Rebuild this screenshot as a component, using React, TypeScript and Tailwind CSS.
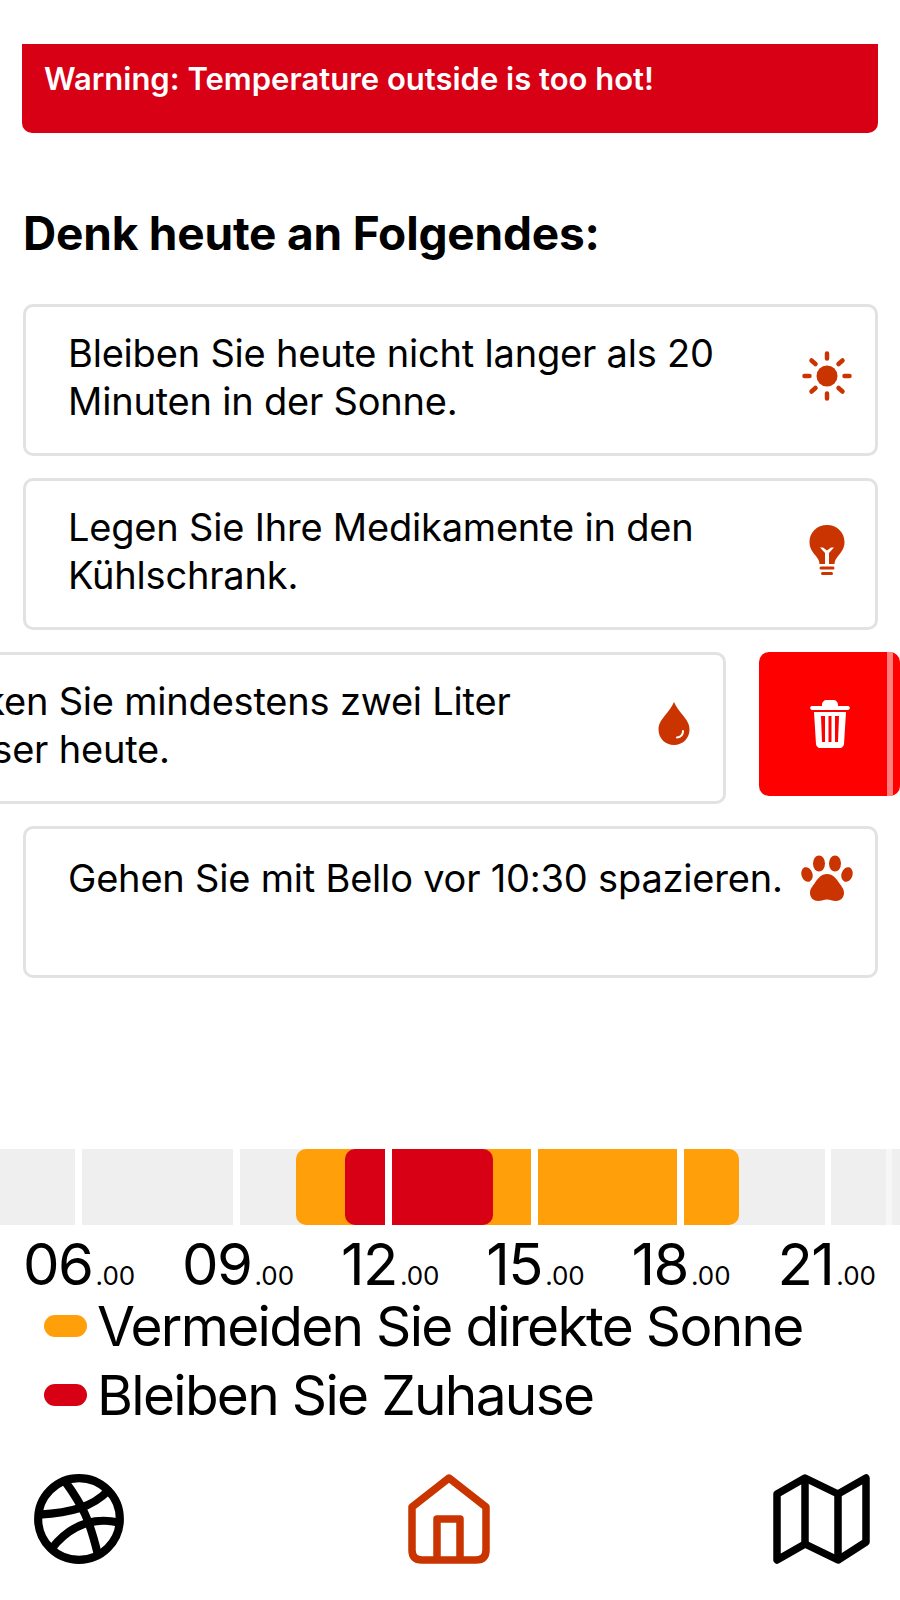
import { Dribbble } from "lucide-react";

const RUST = "#c93400";

function SunIcon() {
  return (
    <svg width="50" height="50" viewBox="0 0 50 50" fill="none">
      <circle cx="25" cy="25" r="10.5" fill={RUST} />
      <g stroke={RUST} strokeWidth="4.5" strokeLinecap="round">
        <path d="M25 2.5v5M25 42.5v5M2.5 25h5M42.5 25h5M9.5 9.5l4 3.5M36.5 37l4 3.5M9.5 40.5l4-3.5M36.5 13l4-3.5" />
      </g>
    </svg>
  );
}

function BulbIcon() {
  return (
    <svg width="36" height="52" viewBox="0 0 36 52">
      <path fill={RUST} d="M18 0C8 0 .5 7.5.5 17c0 6 3 10 6 13.500 2.500 3 4 5.500 4 8.500h15c0-3 1.500-5.500 4-8.500 3-3.500 6-7.500 6-13.500C35.500 7.500 28 0 18 0z" />
      <path fill="#fff" d="M11 22.500l3 0 4 3 4-3 3 0-5 5.500v11h-4V28z" />
      <rect x="10.500" y="41.500" width="15" height="3" rx="1.500" fill={RUST} />
      <rect x="12" y="47" width="12" height="3" rx="1.500" fill={RUST} />
    </svg>
  );
}

function DropIcon() {
  return (
    <svg width="32" height="44" viewBox="0 0 32 44">
      <path fill={RUST} d="M16 0c2 5 5.500 9 9.500 14 3.500 4.500 6 8 6 13.500C31.500 36.500 24.500 43 16 43S.5 36.500.5 27.500C.5 22 3 18.500 6.500 14 10.500 9 14 5 16 0z" />
      <path fill="none" stroke="#fff" strokeWidth="2" strokeLinecap="round" d="M25 29c0 3.500-2 6-6 6.500" />
    </svg>
  );
}

function TrashIcon() {
  return (
    <svg width="40" height="48" viewBox="0 0 40 48">
      <path fill="#fff" d="M12 5c0-3 2-5 5-5h6c3 0 5 2 5 5v1h10c1 0 1.800.8 1.800 1.800S39 10 38 10H2C1 10 .2 8.800.2 7.800S1 6 2 6h10z" />
      <path fill="#fff" fillRule="evenodd" d="M4 12h32l-2 32c-.2 2.300-2 4-4 4H10c-2 0-3.800-1.700-4-4zm7 4l1 26h3V16zm7.500 0v26h3V16zM25 16v26h3l1-26z" />
    </svg>
  );
}

function PawIcon() {
  return (
    <svg width="52" height="46" viewBox="0 0 52 46" fill={RUST}>
      <ellipse cx="6" cy="19.500" rx="5.500" ry="7.500" transform="rotate(-18 6 19.500)" />
      <ellipse cx="18" cy="8.500" rx="6" ry="8" />
      <ellipse cx="34" cy="8.500" rx="6" ry="8" />
      <ellipse cx="46" cy="19.500" rx="5.500" ry="7.500" transform="rotate(18 46 19.500)" />
      <path d="M26 19c6 0 9.500 5 12.500 9.500 2 3 4.500 5 4.500 9.500 0 5-4 8-8 8-4 0-6-1.500-9-1.500S21 46 17 46c-4 0-8-3-8-8 0-4.500 2.500-6.500 4.500-9.500C16.500 24 20 19 26 19z" />
    </svg>
  );
}

function HomeIcon() {
  return (
    <svg className="mr-[3px]" width="82" height="90" viewBox="0 0 82 90" fill="none" stroke={RUST} strokeWidth="7.5" strokeLinejoin="round">
      <path d="M41 4 L78 33 V76 Q78 86 68 86 H14 Q4 86 4 76 V33 Z" />
      <path d="M29 86 V45 H52 V86" />
    </svg>
  );
}

function MapIcon() {
  return (
    <svg width="97" height="90" viewBox="0 0 97 90" fill="none" stroke="#000" strokeWidth="7.5" strokeLinejoin="round">
      <path d="M4 20 L32 4 L65 20 L93 4 V68 L65 86 L32 70 L4 86 Z" />
      <path d="M32 4 V70 M65 20 V86" />
    </svg>
  );
}

function Card({ text, icon, shifted, textTop = "pt-[22px]" }: { text: string[]; icon: React.ReactNode; shifted?: boolean; textTop?: string }) {
  return (
    <div className={`h-[152px] w-[855px] shrink-0 rounded-[10px] border-[3px] border-[#e2e2e2] bg-white flex justify-between ${shifted ? "ml-[-129px]" : "ml-[23px]"}`}>
      <div className={`${textTop} pl-[42px] text-[38px] leading-[48px] tracking-[-0.2px] text-black whitespace-nowrap`}>
        {text.map((line) => (
          <div key={line}>{line}</div>
        ))}
      </div>
      {icon}
    </div>
  );
}

const HOURS = ["06", "09", "12", "15", "18", "21"];

export default function App() {
  return (
    <div className="w-[900px] h-[1600px] overflow-hidden bg-white font-['Inter',sans-serif] flex flex-col pt-[44px]">
      <div className="mx-[22px] h-[89px] shrink-0 rounded-b-[10px] bg-[#d70015] pl-[22px] pt-[16px] text-[31px] leading-[38px] font-semibold text-white">
        Warning: Temperature outside is too hot!
      </div>

      <h1 className="ml-[23px] mt-[72px] text-[46px] leading-[56px] font-bold tracking-[-0.2px] text-black">
        Denk heute an Folgendes:
      </h1>

      <div className="mt-[43px] flex flex-col gap-[22px]">
        <Card
          text={["Bleiben Sie heute nicht langer als 20", "Minuten in der Sonne."]}
          icon={
            <div className="pr-[23px] pt-[44px]">
              <SunIcon />
            </div>
          }
        />
        <Card
          text={["Legen Sie Ihre Medikamente in den", "Kühlschrank."]}
          icon={
            <div className="pr-[30px] pt-[44px]">
              <BulbIcon />
            </div>
          }
        />
        <div className="flex h-[152px] shrink-0">
          <Card
            shifted
            text={["Trinken Sie mindestens zwei Liter", "Wasser heute."]}
            icon={
              <div className="pr-[33px] pt-[47px]">
                <DropIcon />
              </div>
            }
          />
          <div className="relative ml-[33px] h-[144px] w-[141px] shrink-0 rounded-[10px] bg-[#ff0000] flex items-center justify-center">
            <TrashIcon />
            <div className="absolute right-[7px] top-0 h-full w-[6px] bg-[#ff7f7f]" />
          </div>
        </div>
        <Card
          textTop="pt-[25px]"
          text={["Gehen Sie mit Bello vor 10:30 spazieren."]}
          icon={
            <div className="pr-[22px] pt-[26px]">
              <PawIcon />
            </div>
          }
        />
      </div>

      <div className="relative h-[76px] shrink-0 mt-[171px] bg-[#efefef]">
        <div className="absolute left-[296px] top-0 h-full w-[443px] rounded-[10px] bg-[#ff9f0a]" />
        <div className="absolute left-[345px] top-0 h-full w-[148px] rounded-[10px] bg-[#d70015]" />
        <div className="absolute left-[75px] top-0 h-full w-[7px] bg-white" />
        <div className="absolute left-[233px] top-0 h-full w-[7px] bg-white" />
        <div className="absolute left-[385px] top-0 h-full w-[7px] bg-white" />
        <div className="absolute left-[531px] top-0 h-full w-[7px] bg-white" />
        <div className="absolute left-[677px] top-0 h-full w-[7px] bg-white" />
        <div className="absolute left-[825px] top-0 h-full w-[6px] bg-white" />
        <div className="absolute left-[886px] top-0 h-full w-[6px] bg-[#f7f7f7]" />
      </div>

      <div className="flex justify-between pl-[23px] pr-[24px] mt-[18px] text-black">
        {HOURS.map((hour) => (
          <div key={hour} className="flex items-baseline">
            <span className="text-[58px] leading-[42px] tracking-[-1.5px]">{hour}</span>
            <span className="ml-[3px] text-[26px] leading-[20px]">.00</span>
          </div>
        ))}
      </div>

      <div className="ml-[44px] mt-[5px] flex flex-col text-black">
        <div className="flex items-center h-[69px]">
          <div className="h-[22px] w-[43px] rounded-full bg-[#ff9f0a]" />
          <span className="ml-[10px] text-[55px] leading-[56px] tracking-[-1.7px]">Vermeiden Sie direkte Sonne</span>
        </div>
        <div className="flex items-center h-[69px]">
          <div className="h-[22px] w-[43px] rounded-full bg-[#d70015]" />
          <span className="ml-[10px] text-[55px] leading-[56px] tracking-[-1.7px]">Bleiben Sie Zuhause</span>
        </div>
      </div>

      <div className="mt-[45px] flex justify-between items-start pl-[30px] pr-[30px]">
        <Dribbble size={98} strokeWidth={2} color="#000" className="mt-[-4px]" />
        <HomeIcon />
        <MapIcon />
      </div>
    </div>
  );
}
